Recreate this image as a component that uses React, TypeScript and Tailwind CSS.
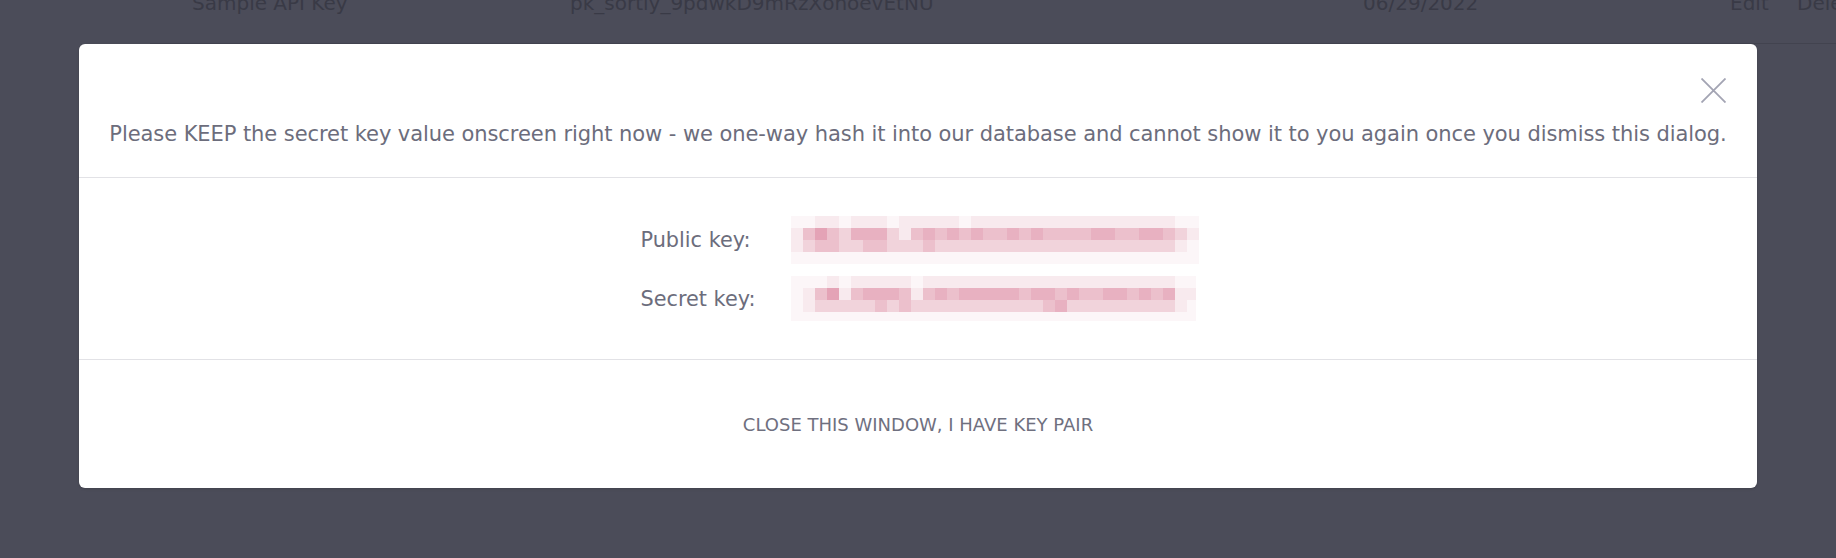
import React from "react";

const shades = [
  "bg-[#fcf6f8]",
  "bg-[#f8eaee]",
  "bg-[#f1d3db]",
  "bg-[#ecc0cc]",
  "bg-[#e8b1c1]",
  "bg-[#e4a3b6]",
];

const publicKeyPixels = [
  [0, 0, 1, 1, 0, 1, 1, 1, 0, 1, 1, 1, 1, 1, 0, 1, 1, 1, 1, 1, 1, 1, 1, 1, 1, 1, 1, 1, 1, 1, 1, 1, 0, 0],
  [1, 3, 5, 3, 2, 4, 4, 4, 2, 1, 3, 4, 3, 4, 3, 4, 3, 3, 4, 3, 4, 3, 3, 3, 3, 4, 4, 3, 3, 4, 4, 3, 2, 1],
  [1, 2, 3, 3, 2, 2, 3, 3, 2, 2, 2, 3, 2, 2, 2, 2, 2, 2, 2, 2, 2, 2, 2, 2, 2, 2, 2, 2, 2, 2, 2, 2, 1, 0],
  [0, 0, 0, 0, 0, 0, 0, 0, 0, 0, 0, 0, 0, 0, 0, 0, 0, 0, 0, 0, 0, 0, 0, 0, 0, 0, 0, 0, 0, 0, 0, 0, 0, 0],
];

const secretKeyPixels = [
  [0, 0, 0, 1, 0, 1, 1, 1, 1, 1, 0, 1, 1, 1, 1, 1, 1, 1, 1, 1, 1, 1, 1, 1, 1, 1, 1, 1, 1, 1, 1, 1, 0, 0],
  [0, 1, 3, 5, 1, 3, 4, 4, 4, 3, 1, 3, 4, 3, 4, 4, 4, 4, 4, 3, 4, 4, 3, 4, 3, 3, 4, 4, 3, 4, 3, 4, 1, 1],
  [0, 1, 2, 2, 2, 2, 2, 3, 2, 3, 2, 2, 2, 2, 2, 2, 2, 2, 2, 2, 2, 3, 4, 2, 2, 2, 2, 2, 2, 2, 2, 2, 1, 0],
  [0, 0, 0, 0, 0, 0, 0, 0, 0, 0, 0, 0, 0, 0, 0, 0, 0, 0, 0, 0, 0, 0, 0, 0, 0, 0, 0, 0, 0, 0, 0, 0, 0, 0],
];

function RedactedValue({ pixels, label }: { pixels: number[][]; label: string }) {
  return (
    <div aria-label={label} className="flex flex-col overflow-hidden bg-[#fcf6f8]">
      {pixels.map((row, r) => (
        <div key={r} className="flex">
          {row.map((v, c) => (
            <div key={c} className={`h-[12px] w-[12px] shrink-0 ${shades[v]}`} />
          ))}
        </div>
      ))}
    </div>
  );
}

export default function App() {
  return (
    <div className="relative h-[558px] w-full overflow-hidden bg-[#4b4c59] font-['DejaVu_Sans',sans-serif]">
      {/* page underneath the overlay */}
      <div className="ml-[150px] h-[51px] border-b border-[#42434f]">
        <div className="-mt-[7px] flex whitespace-nowrap pl-[42px] text-[20px] leading-[20px] text-[#393a46]">
          <span className="w-[378px] shrink-0">Sample API Key</span>
          <span className="w-[793px] shrink-0">pk_sortly_9pdwkD9mRzXohoevEtNU</span>
          <span className="w-[367px] shrink-0">06/29/2022</span>
          <span className="w-[67px] shrink-0">Edit</span>
          <span className="shrink-0">Delete</span>
        </div>
      </div>

      {/* dialog */}
      <div className="absolute inset-0 flex justify-center pt-[44px]">
        <div className="relative flex h-[444px] w-[1678px] flex-col rounded-[6px] bg-white shadow-sm">
          <button
            aria-label="Close"
            className="absolute right-[31px] top-[34px] h-[25px] w-[25px] text-[#a3a4b3]"
          >
            <svg viewBox="0 0 25 25" className="h-full w-full" fill="none" stroke="currentColor" strokeWidth="1.8">
              <path d="M0.5 0.5L24.5 24.5M24.5 0.5L0.5 24.5" />
            </svg>
          </button>

          <div className="h-[134px] shrink-0 whitespace-nowrap border-b border-[#e2e2e6] px-[20px] pt-[74px] text-center text-[21px] leading-[33px] tracking-[-0.07px] text-[#6c6d7c]">
            Please KEEP the secret key value onscreen right now - we one-way hash it into our database and cannot show it to you again once you dismiss this dialog.
          </div>

          <div className="flex h-[182px] shrink-0 items-start justify-center border-b border-[#e2e2e6] pt-[38px]">
            <div className="grid grid-cols-[150px_408px] content-start gap-y-[12px] pl-[3px] text-[20.8px] text-[#6c6d7c]">
              <div className="flex h-[48px] items-center pt-[2px]">Public key:</div>
              <div className="h-[48px] w-[408px]">
                <RedactedValue pixels={publicKeyPixels} label="Public key value" />
              </div>
              <div className="flex h-[45px] items-center pt-[3px]">Secret key:</div>
              <div className="h-[45px] w-[405px] overflow-hidden">
                <RedactedValue pixels={secretKeyPixels} label="Secret key value" />
              </div>
            </div>
          </div>

          <div className="flex flex-1 items-center justify-center">
            <button className="text-[18px] uppercase text-[#6f707f]">
              Close this window, I have key pair
            </button>
          </div>
        </div>
      </div>
    </div>
  );
}
